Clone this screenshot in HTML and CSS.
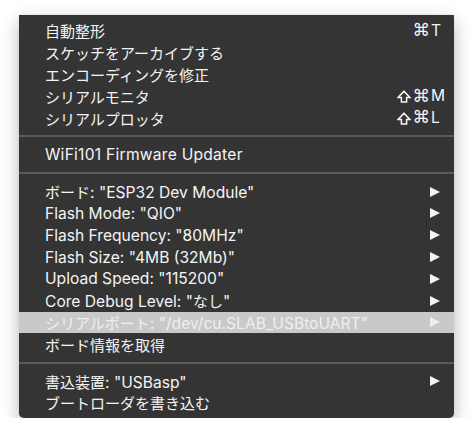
FILE: index.html
```html
<!DOCTYPE html>
<html lang="ja">
<head>
<meta charset="utf-8">
<title>Menu</title>
<link rel="stylesheet" href="styles.css">
</head>
<body>
<div class="menu">
  <div class="group">
    <div class="item"><span class="label ja">自動整形</span><span class="shortcut"><span class="cmd">⌘</span><span class="key">T</span></span></div>
    <div class="item"><span class="label ja">スケッチをアーカイブする</span></div>
    <div class="item"><span class="label ja">エンコーディングを修正</span></div>
    <div class="item"><span class="label ja">シリアルモニタ</span><span class="shortcut"><svg class="shift" viewBox="0 0 14 13" aria-label="Shift"><path d="M7 1.2 L12.8 7.4 L9.6 7.4 L9.6 12 L4.4 12 L4.4 7.4 L1.2 7.4 Z"/></svg><span class="cmd">⌘</span><span class="key">M</span></span></div>
    <div class="item"><span class="label ja">シリアルプロッタ</span><span class="shortcut"><svg class="shift" viewBox="0 0 14 13" aria-label="Shift"><path d="M7 1.2 L12.8 7.4 L9.6 7.4 L9.6 12 L4.4 12 L4.4 7.4 L1.2 7.4 Z"/></svg><span class="cmd">⌘</span><span class="key">L</span></span></div>
  </div>
  <div class="sep"></div>
  <div class="group">
    <div class="item"><span class="label wide">WiFi101 Firmware Updater</span></div>
  </div>
  <div class="sep"></div>
  <div class="group">
    <div class="item"><span class="label"><span class="ja">ボード</span>: "ESP32 Dev Module"</span><svg class="arrow" viewBox="0 0 10 10"><path d="M0 0 L10 5 L0 10 Z"/></svg></div>
    <div class="item"><span class="label">Flash Mode: "QIO"</span><svg class="arrow" viewBox="0 0 10 10"><path d="M0 0 L10 5 L0 10 Z"/></svg></div>
    <div class="item"><span class="label">Flash Frequency: "80MHz"</span><svg class="arrow" viewBox="0 0 10 10"><path d="M0 0 L10 5 L0 10 Z"/></svg></div>
    <div class="item"><span class="label">Flash Size: "4MB (32Mb)"</span><svg class="arrow" viewBox="0 0 10 10"><path d="M0 0 L10 5 L0 10 Z"/></svg></div>
    <div class="item"><span class="label">Upload Speed: "115200"</span><svg class="arrow" viewBox="0 0 10 10"><path d="M0 0 L10 5 L0 10 Z"/></svg></div>
    <div class="item"><span class="label">Core Debug Level: "<span class="ja">なし</span>"</span><svg class="arrow" viewBox="0 0 10 10"><path d="M0 0 L10 5 L0 10 Z"/></svg></div>
    <div class="item selected"><span class="label"><span class="ja">シリアルポート</span>: "/dev/cu.SLAB_USBtoUART"</span><svg class="arrow" viewBox="0 0 10 10"><path d="M0 0 L10 5 L0 10 Z"/></svg></div>
    <div class="item"><span class="label ja">ボード情報を取得</span></div>
  </div>
  <div class="sep"></div>
  <div class="group">
    <div class="item"><span class="label"><span class="ja">書込装置</span>: "USBasp"</span><svg class="arrow" viewBox="0 0 10 10"><path d="M0 0 L10 5 L0 10 Z"/></svg></div>
    <div class="item"><span class="label ja">ブートローダを書き込む</span></div>
  </div>
</div>
</body>
</html>
```

FILE: styles.css
```css
html, body {
  margin: 0;
  padding: 0;
  background: #ffffff;
}

body {
  padding: 15px 0 0 19px;
  font-family: "Inter", "Noto Sans CJK JP", sans-serif;
}

.menu {
  width: 435px;
  box-sizing: border-box;
  background: #343434;
  border-radius: 0 0 5px 5px;
  box-shadow: 0 6px 18px rgba(0, 0, 0, 0.28), 0 0 1px rgba(0, 0, 0, 0.2);
  padding: 5px 0 4px;
  color: #f4f4f4;
  font-size: 15.6px;
}

.item {
  display: flex;
  align-items: center;
  height: 21.8px;
  padding: 0 8px 0 26px;
  white-space: nowrap;
}

.label {
  flex: 1;
}

.wide {
  letter-spacing: 0.25px;
}

.ja {
  font-family: "Noto Sans CJK JP", sans-serif;
  font-size: 15px;
}

.shortcut {
  display: flex;
  align-items: center;
  line-height: 1;
}

.shift {
  width: 14px;
  height: 13px;
  margin-right: 2px;
  fill: none;
  stroke: #f4f4f4;
  stroke-width: 1.5;
  stroke-linejoin: miter;
}

.cmd {
  font-family: "DejaVu Sans", sans-serif;
  font-size: 17.5px;
  margin-right: 1px;
}

.key {
  width: 15px;
  font-family: "Inter", sans-serif;
  font-size: 15.6px;
}

.arrow {
  width: 10px;
  height: 10px;
  margin-right: 6px;
  fill: #f4f4f4;
}

.sep {
  height: 2px;
  margin: 6.5px 0;
  background: #5a5a5a;
}

.selected {
  background: #c9c9c9;
  color: #efefef;
}

.selected .arrow {
  fill: #efefef;
}
```
